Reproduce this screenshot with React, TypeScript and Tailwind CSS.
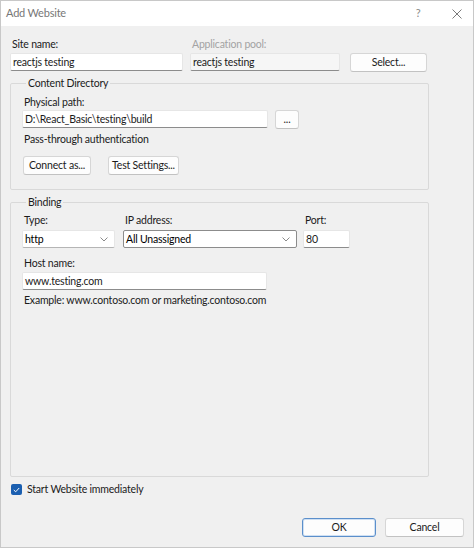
const font = { fontFamily: 'Lato, "Noto Sans", sans-serif' }

function Chevron() {
  return (
    <svg width="8" height="5" viewBox="0 0 8 5" className="shrink-0">
      <path d="M0.5 0.5 L4 4 L7.5 0.5" fill="none" stroke="#8a8a8a" strokeWidth="1" />
    </svg>
  )
}

function TextBox({ value, className = '', muted = false }: { value: string; className?: string; muted?: boolean }) {
  return (
    <div
      className={`h-[18px] flex items-center px-[2px] border border-[#e6e6e6] border-b-[#8c8c8c] rounded-[2px] ${
        muted ? 'bg-[#f6f6f6]' : 'bg-white'
      } ${className}`}
    >
      <span className="leading-none text-[#1b1b1b] whitespace-nowrap">{value}</span>
    </div>
  )
}

function Button({ label, className = '', primary = false }: { label: string; className?: string; primary?: boolean }) {
  return (
    <div
      className={`h-[19px] flex items-center justify-center whitespace-nowrap rounded-[3px] border bg-[#fdfdfd] text-[#1b1b1b] ${
        primary ? 'border-[#5b8fcb] shadow-[inset_0_0_0_1px_#cfe0f3]' : 'border-[#d6d6d6] border-b-[#c2c2c2]'
      } ${className}`}
    >
      {label}
    </div>
  )
}

function Label({ children, muted = false }: { children: React.ReactNode; muted?: boolean }) {
  return (
    <div className={`leading-[15px] pl-[2px] whitespace-nowrap ${muted ? 'text-[#a3a3a3]' : 'text-[#1b1b1b]'}`}>
      {children}
    </div>
  )
}

export default function App() {
  return (
    <div
      style={font}
      className="w-[474px] h-[548px] flex flex-col text-[10.5px] tracking-[-0.2px] bg-white border border-[#c8c8c8]"
    >
      {/* Title bar */}
      <div className="h-[25px] shrink-0 flex items-center bg-white text-[#777777] text-[11px]">
        <span className="pl-[5px] flex-1">Add Website</span>
        <span className="w-[20px] text-center mr-[24px] text-[#8a8a8a]">?</span>
        <svg width="10" height="10" viewBox="0 0 10 10" className="mr-[11px]">
          <path d="M0.5 0.5 L9.5 9.5 M9.5 0.5 L0.5 9.5" stroke="#7a7a7a" strokeWidth="1" />
        </svg>
      </div>

      <div className="flex-1 flex flex-col bg-[#f0f0f0] pl-[9px] pr-[44px] pt-[11px] pb-[10px]">
        {/* Site name / application pool */}
        <div className="flex items-end">
          <div className="w-[173px]">
            <Label>Site name:</Label>
            <TextBox value="reactjs testing" className="mt-[1px]" />
          </div>
          <div className="w-[150px] ml-[7px]">
            <Label muted>Application pool:</Label>
            <TextBox value="reactjs testing" muted className="mt-[1px]" />
          </div>
          <Button label="Select..." className="w-[77px] ml-[10px] mb-[-1px]" />
        </div>

        {/* Content directory */}
        <fieldset className="mt-[5px] border border-[#d9d9d9] rounded-[2px] pl-[11px] pb-[14px]">
          <legend className="ml-[4px] px-[2px] leading-[15px] text-[#1b1b1b]">Content Directory</legend>
          <div className="mt-[4px]">
            <Label>Physical path:</Label>
            <div className="flex">
              <TextBox value="D:\React_Basic\testing\build" className="w-[246px]" />
              <Button label="..." className="w-[24px] h-[18px] ml-[7px]" />
            </div>
          </div>
          <div className="mt-[3px]">
            <Label>Pass-through authentication</Label>
          </div>
          <div className="flex mt-[9px]">
            <Button label="Connect as..." className="w-[68px] ml-[1px]" />
            <Button label="Test Settings..." className="w-[71px] ml-[17px]" />
          </div>
        </fieldset>

        {/* Binding */}
        <fieldset className="mt-[5px] flex-1 border border-[#d9d9d9] rounded-[2px] pl-[11px]">
          <legend className="ml-[4px] px-[2px] leading-[15px] text-[#1b1b1b]">Binding</legend>
          <div className="flex mt-[3px]">
            <div className="w-[93px]">
              <Label>Type:</Label>
              <div className="mt-[2px] h-[18px] flex items-center justify-between bg-white border border-[#e6e6e6] border-b-[#b5b5b5] rounded-[2px] pl-[2px] pr-[6px]">
                <span className="leading-none">http</span>
                <Chevron />
              </div>
            </div>
            <div className="w-[174px] ml-[8px]">
              <Label>IP address:</Label>
              <div className="mt-[2px] h-[18px] flex items-center justify-between bg-white border border-[#8c8c8c] rounded-[2px] pl-[2px] pr-[6px]">
                <span className="leading-none">All Unassigned</span>
                <Chevron />
              </div>
            </div>
            <div className="w-[47px] ml-[6px]">
              <Label>Port:</Label>
              <TextBox value="80" className="mt-[2px]" />
            </div>
          </div>
          <div className="mt-[8px]">
            <Label>Host name:</Label>
            <TextBox value="www.testing.com" className="w-[245px] mt-[1px]" />
          </div>
          <div className="mt-[3px]">
            <Label>Example: www.contoso.com or marketing.contoso.com</Label>
          </div>
        </fieldset>

        {/* Start immediately */}
        <div className="flex items-center mt-[5px] ml-[1px] h-[15px]">
          <div className="w-[11px] h-[11px] rounded-[2px] bg-[#1b5fb0] flex items-center justify-center">
            <svg width="7" height="6" viewBox="0 0 7 6">
              <path d="M0.8 3 L2.7 4.8 L6.2 1" fill="none" stroke="white" strokeWidth="1" />
            </svg>
          </div>
          <span className="ml-[5px] leading-[15px] text-[#1b1b1b]">Start Website immediately</span>
        </div>

        {/* Dialog buttons */}
        <div className="flex justify-end mt-[21px] mr-[-35px]">
          <Button label="OK" primary className="w-[74px]" />
          <Button label="Cancel" className="w-[79px] ml-[9px]" />
        </div>
      </div>
    </div>
  )
}
